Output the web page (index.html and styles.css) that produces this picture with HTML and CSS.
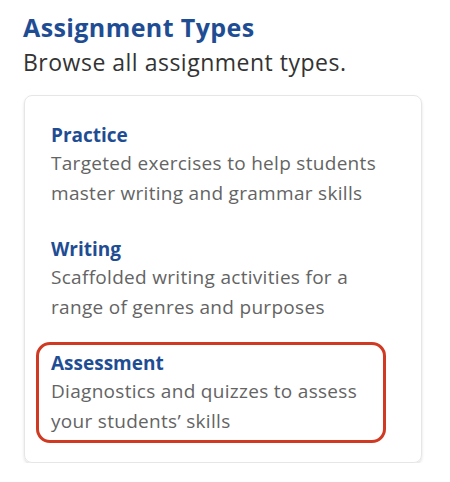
FILE: index.html
```html
<!DOCTYPE html>
<html>
<head>
<meta charset="utf-8">
<link rel="stylesheet" href="styles.css">
</head>
<body>
<div class="page">
  <h1 class="title">Assignment Types</h1>
  <p class="subtitle">Browse all assignment types.</p>
  <div class="card">
    <div class="item">
      <h2 class="item-title">Practice</h2>
      <p class="item-desc">Targeted exercises to help students master writing and grammar skills</p>
    </div>
    <div class="item">
      <h2 class="item-title">Writing</h2>
      <p class="item-desc">Scaffolded writing activities for a range of genres and purposes</p>
    </div>
    <div class="item item-highlight">
      <h2 class="item-title">Assessment</h2>
      <p class="item-desc">Diagnostics and quizzes to assess your students’ skills</p>
    </div>
  </div>
</div>
</body>
</html>
```

FILE: styles.css
```css
html, body {
  margin: 0;
  padding: 0;
  background: #ffffff;
}
.page {
  font-family: "Open Sans", Lato, sans-serif;
  padding: 9px 0 0 23px;
}
.title {
  margin: 0;
  font-size: 25px;
  line-height: 37px;
  font-weight: 700;
  letter-spacing: 0.4px;
  color: #1f4d94;
}
.subtitle {
  margin: 0;
  font-size: 23px;
  line-height: 32px;
  letter-spacing: 0.5px;
  color: #333333;
}
.card {
  margin-top: 17px;
  margin-left: 1px;
  width: 398px;
  border: 1px solid #e6e6e6;
  border-radius: 8px;
  box-shadow: 0 2px 3px rgba(0,0,0,0.12);
  padding: 27px 0 19px 26px;
  box-sizing: border-box;
  display: flex;
  flex-direction: column;
  gap: 29px;
}
.item-title {
  margin: 0;
  font-size: 19px;
  line-height: 25px;
  font-weight: 700;
  color: #1f4d94;
}
.item-desc {
  margin: 0;
  font-size: 19px;
  line-height: 30px;
  letter-spacing: 0.3px;
  color: #646464;
  width: 336px;
}
.item-highlight {
  margin-left: -15px;
  margin-top: -9px;
  width: 350px;
  box-sizing: border-box;
  border: 3px solid #d03a23;
  border-radius: 14px;
  padding: 6px 12px 4px 12px;
}
```
